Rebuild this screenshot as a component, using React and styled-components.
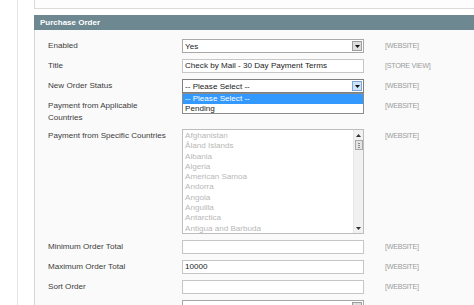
import React from "react";
import styled, { createGlobalStyle } from "styled-components";

const GlobalStyle = createGlobalStyle`
  html, body { margin: 0; padding: 0; background: #ffffff; overflow: hidden; }
  body { font-family: "Liberation Sans", Arial, sans-serif; }
  * { box-sizing: border-box; }
`;

const Page = styled.div`
  display: flex;
  width: 474px;
  height: 305px;
  overflow: hidden;
  background: #ffffff;
`;

const Gutter = styled.div`
  flex: 0 0 18px;
  border-right: 1px solid #e4e4e4;
`;

const Main = styled.div`
  flex: 0 0 560px;
  padding-left: 16px;
`;

const PrevBox = styled.div`
  height: 9px;
  background: #fdfdfd;
  border-left: 1px solid #dadada;
  border-bottom: 1px solid #dadada;
`;

const SectionHead = styled.div`
  margin-top: 6px;
  height: 15px;
  line-height: 15px;
  background: #6e8891;
  color: #ffffff;
  font-weight: bold;
  font-size: 8px;
  padding-left: 6px;
`;

const Fieldset = styled.div`
  background: #fafafa;
  border-left: 1px solid #d6d6d6;
  padding: 9px 0 20px 13px;
`;

const Row = styled.div`
  display: grid;
  grid-template-columns: 134px 182px 1fr;
  align-items: start;
  margin-bottom: 6px;
`;

const Label = styled.div`
  font-size: 8.1px;
  line-height: 12px;
  padding-top: 1px;
  margin-bottom: -1px;
  padding-right: 10px;
  color: #3c3c3c;
`;

const Scope = styled.div`
  padding-left: 21px;
  font-size: 7.2px;
  letter-spacing: -0.3px;
  line-height: 14px;
  color: #9a9a9a;
`;

const Field = styled.div`
  position: relative;
`;

const SelectBox = styled.div`
  height: 14px;
  display: flex;
  align-items: center;
  padding-left: 2px;
  padding-right: 1px;
  background: #ffffff;
  border: 1px solid ${(p) => (p.$open ? "#7f7f7f" : "#a8a8a8")};
  font-size: 8.1px;
  color: #222;
`;

const SelectText = styled.span`
  flex: 1;
  white-space: nowrap;
  overflow: hidden;
`;

const ArrowBtn = styled.span`
  width: 10px;
  height: 10px;
  display: flex;
  align-items: center;
  justify-content: center;
  background: ${(p) => (p.$open ? "#cfe3f7" : "#dedede")};
  border: 1px solid ${(p) => (p.$open ? "#7aa6d6" : "#9d9d9d")};
`;

const Dropdown = styled.div`
  position: absolute;
  top: 14px;
  left: 0;
  width: 182px;
  background: #ffffff;
  border: 1px solid #8c8c8c;
  z-index: 2;
`;

const DropItem = styled.div`
  height: ${(p) => (p.$first ? "10px" : "9px")};
  line-height: ${(p) => (p.$first ? "10px" : "9px")};
  padding-left: 2px;
  font-size: 8.1px;
  color: ${(p) => (p.$active ? "#ffffff" : "#222")};
  background: ${(p) => (p.$active ? "#3399ff" : "#ffffff")};
`;

const TextInput = styled.div`
  height: 14px;
  line-height: 12px;
  padding-left: 2px;
  background: #ffffff;
  border: 1px solid #c6c6c6;
  font-size: 8.1px;
  color: #222;
  white-space: nowrap;
`;

const MultiBox = styled.div`
  height: 105px;
  display: flex;
  background: #ffffff;
  border: 1px solid #bdbdbd;
`;

const MultiList = styled.div`
  flex: 1;
  padding: 1px 0 0 2px;
  overflow: hidden;
`;

const MultiItem = styled.div`
  height: 10.3px;
  line-height: 10.3px;
  font-size: 8.1px;
  color: #b8b8b8;
  white-space: nowrap;
`;

const ScrollBar = styled.div`
  width: 10px;
  display: flex;
  flex-direction: column;
  align-items: center;
  background: #f1f1f1;
  border-left: 1px solid #e6e6e6;
`;

const ScrollArrow = styled.div`
  height: 10px;
  display: flex;
  align-items: center;
  justify-content: center;
`;

const Thumb = styled.div`
  width: 8px;
  height: 10px;
  background: #e4e4e4;
  border: 1px solid #a9a9a9;
  display: flex;
  flex-direction: column;
  justify-content: center;
  gap: 1px;
  padding: 0 2px;
`;

const Grip = styled.span`
  display: block;
  height: 1px;
  background: #8a8a8a;
`;

const ScrollSpace = styled.div`
  flex: 1;
`;

const Tri = ({ up, color = "#111" }) => (
  <svg width="5" height="3" viewBox="0 0 5 3">
    {up ? <path d="M0 3 L2.5 0 L5 3 Z" fill={color} /> : <path d="M0 0 L5 0 L2.5 3 Z" fill={color} />}
  </svg>
);

const Select = ({ value, open, options }) => (
  <Field>
    <SelectBox $open={open}>
      <SelectText>{value}</SelectText>
      <ArrowBtn $open={open}>
        <Tri />
      </ArrowBtn>
    </SelectBox>
    {open && (
      <Dropdown>
        {options.map((o, i) => (
          <DropItem key={o} $active={i === 0} $first={i === 0}>
            {o}
          </DropItem>
        ))}
      </Dropdown>
    )}
  </Field>
);

const countries = [
  "Afghanistan",
  "Åland Islands",
  "Albania",
  "Algeria",
  "American Samoa",
  "Andorra",
  "Angola",
  "Anguilla",
  "Antarctica",
  "Antigua and Barbuda",
];

export default function App() {
  return (
    <>
      <GlobalStyle />
      <Page>
        <Gutter />
        <Main>
          <PrevBox />
          <SectionHead>Purchase Order</SectionHead>
          <Fieldset>
            <Row>
              <Label>Enabled</Label>
              <Select value="Yes" />
              <Scope>[WEBSITE]</Scope>
            </Row>
            <Row>
              <Label>Title</Label>
              <TextInput>Check by Mail - 30 Day Payment Terms</TextInput>
              <Scope>[STORE VIEW]</Scope>
            </Row>
            <Row>
              <Label>New Order Status</Label>
              <Select value="-- Please Select --" open options={["-- Please Select --", "Pending"]} />
              <Scope>[WEBSITE]</Scope>
            </Row>
            <Row>
              <Label>Payment from Applicable Countries</Label>
              <Select value="" />
              <Scope>[WEBSITE]</Scope>
            </Row>
            <Row>
              <Label>Payment from Specific Countries</Label>
              <MultiBox>
                <MultiList>
                  {countries.map((c) => (
                    <MultiItem key={c}>{c}</MultiItem>
                  ))}
                </MultiList>
                <ScrollBar>
                  <ScrollArrow>
                    <Tri up color="#333" />
                  </ScrollArrow>
                  <Thumb>
                    <Grip />
                    <Grip />
                    <Grip />
                  </Thumb>
                  <ScrollSpace />
                  <ScrollArrow>
                    <Tri color="#333" />
                  </ScrollArrow>
                </ScrollBar>
              </MultiBox>
              <Scope>[WEBSITE]</Scope>
            </Row>
            <Row>
              <Label>Minimum Order Total</Label>
              <TextInput />
              <Scope>[WEBSITE]</Scope>
            </Row>
            <Row>
              <Label>Maximum Order Total</Label>
              <TextInput>10000</TextInput>
              <Scope>[WEBSITE]</Scope>
            </Row>
            <Row>
              <Label>Sort Order</Label>
              <TextInput />
              <Scope>[WEBSITE]</Scope>
            </Row>
            <Row>
              <Label />
              <Select value="" />
              <Scope />
            </Row>
          </Fieldset>
        </Main>
      </Page>
    </>
  );
}
